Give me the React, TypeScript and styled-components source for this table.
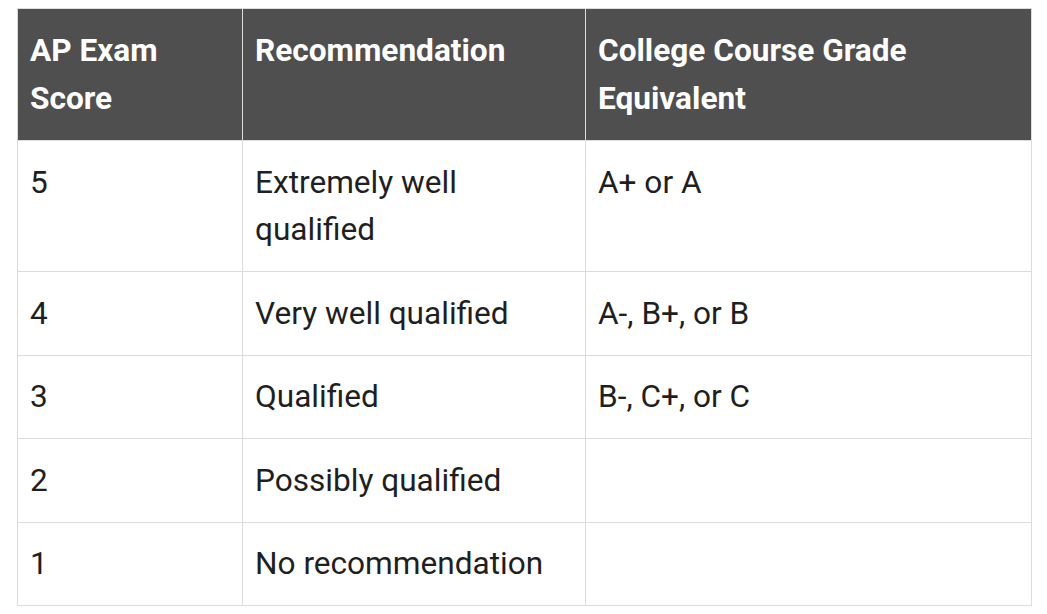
import React from "react";
import styled, { createGlobalStyle } from "styled-components";

const Global = createGlobalStyle`
  html, body { margin: 0; padding: 0; background: #ffffff; }
  body { font-family: Roboto, "Noto Sans", Arial, sans-serif; }
`;

const Page = styled.div`
  padding: 8px 0 0 17px;
`;

const Table = styled.table`
  border-collapse: collapse;
  width: 1014px;
  table-layout: fixed;
  font-family: Roboto, Arial, sans-serif;
  font-size: 31.6px;
  line-height: 47.5px;
`;

const Col = styled.col<{ $w: number }>`
  width: ${(p) => p.$w}px;
`;

const Th = styled.th`
  background: #4f4f4f;
  color: #ffffff;
  font-weight: 700;
  text-align: left;
  vertical-align: top;
  padding: 18px 12px;
  border: 1px solid #dcdcdc;
`;

const Td = styled.td`
  color: #1f1f1f;
  font-weight: 400;
  text-align: left;
  vertical-align: top;
  padding: 17.5px 12px;
  border: 1px solid #dcdcdc;
`;

const rows: [string, string, string][] = [
  ["5", "Extremely well qualified", "A+ or A"],
  ["4", "Very well qualified", "A-, B+, or B"],
  ["3", "Qualified", "B-, C+, or C"],
  ["2", "Possibly qualified", ""],
  ["1", "No recommendation", ""],
];

export default function App() {
  return (
    <Page>
      <Global />
      <Table>
        <colgroup>
          <Col $w={225} />
          <Col $w={343} />
          <Col $w={446} />
        </colgroup>
        <thead>
          <tr>
            <Th>AP Exam Score</Th>
            <Th>Recommendation</Th>
            <Th>College Course Grade Equivalent</Th>
          </tr>
        </thead>
        <tbody>
          {rows.map((r) => (
            <tr key={r[0]}>
              <Td>{r[0]}</Td>
              <Td>{r[1]}</Td>
              <Td>{r[2]}</Td>
            </tr>
          ))}
        </tbody>
      </Table>
    </Page>
  );
}
